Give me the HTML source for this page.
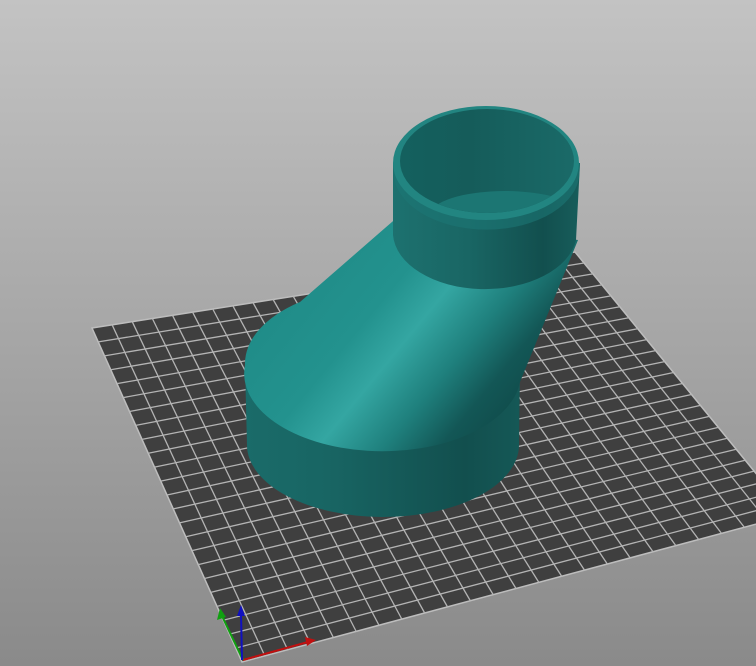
<!DOCTYPE html>
<html><head><meta charset="utf-8"><style>html,body{margin:0;padding:0;width:756px;height:666px;overflow:hidden}svg{display:block}</style></head>
<body>
<svg id="s" width="756" height="666" viewBox="0 0 756 666" xmlns="http://www.w3.org/2000/svg">
<defs>
<linearGradient id="bg" x1="0" y1="0" x2="0" y2="1"><stop offset="0" stop-color="#c3c3c3"/><stop offset="1" stop-color="#8a8a8a"/></linearGradient>
<linearGradient id="tube" gradientUnits="userSpaceOnUse" x1="250" y1="290" x2="530" y2="520"><stop offset="0" stop-color="#1f8a86"/><stop offset=".3" stop-color="#23928e"/><stop offset=".42" stop-color="#34a6a2"/><stop offset=".56" stop-color="#1f807d"/><stop offset=".68" stop-color="#135756"/><stop offset=".8" stop-color="#0f4a49"/></linearGradient>
<linearGradient id="base" gradientUnits="userSpaceOnUse" x1="247" y1="0" x2="519" y2="0"><stop offset="0" stop-color="#1a6b69"/><stop offset=".3" stop-color="#186563"/><stop offset=".8" stop-color="#124f4e"/><stop offset="1" stop-color="#155856"/></linearGradient>
<linearGradient id="up" gradientUnits="userSpaceOnUse" x1="393" y1="0" x2="580" y2="0"><stop offset="0" stop-color="#1d716f"/><stop offset=".4" stop-color="#196664"/><stop offset=".8" stop-color="#124f4e"/><stop offset="1" stop-color="#175d5b"/></linearGradient>
<linearGradient id="inner" gradientUnits="userSpaceOnUse" x1="400" y1="0" x2="575" y2="0"><stop offset="0" stop-color="#14605e"/><stop offset=".4" stop-color="#155c5a"/><stop offset="1" stop-color="#1a6a68"/></linearGradient>
<clipPath id="ic"><ellipse cx="487" cy="161" rx="87" ry="52"/></clipPath>
</defs>
<rect width="756" height="666" fill="url(#bg)"/>
<polygon points="92,328 575,252 790,515 242,662" fill="#3f3f3f" stroke="#bdbdbd" stroke-width="1.5"/>
<g id="grid" stroke="#b4b4b4" stroke-width="1.3"></g>
<line x1="243" y1="660" x2="308" y2="642" stroke="#c01010" stroke-width="2"/>
<polygon points="316,640 305,637 307,646" fill="#c01010"/>
<line x1="243" y1="660" x2="222" y2="616" stroke="#10a010" stroke-width="2"/>
<polygon points="220,608 217,620 226,617" fill="#10a010"/>
<line x1="242" y1="660" x2="241" y2="614" stroke="#1010c0" stroke-width="2"/>
<polygon points="241,605 237,616 245,616" fill="#1010c0"/>
<path d="M245,365 L247,445 A136,72 0 0 0 519,445 L520,365 Z" fill="url(#base)"/>
<path d="M245,365 A137,77 0 0 1 300,302 L400,215 L578,240 L520,382 A137,77 0 0 1 245,365 Z" fill="url(#tube)"/>
<path d="M393,163 L393,235 A92,57 0 0 0 576,240 L580,163 Z" fill="url(#up)"/>
<path d="M393,163 L393.5,172 A92,57 0 0 0 579.5,172 L580,163 Z" fill="#1d7774" opacity=".6"/>
<ellipse cx="486" cy="163" rx="93" ry="57" fill="#228581"/>
<ellipse cx="487" cy="161" rx="87" ry="52" fill="url(#inner)"/>
<g clip-path="url(#ic)"><ellipse cx="505" cy="215" rx="75" ry="24" fill="#1c7673"/></g>
</svg>
<script>
var g=document.getElementById('grid');
var A=[92,328],B=[575,252],C=[790,515],D=[242,662],N=24;
function p(u,v){var x=(1-u)*(1-v)*A[0]+u*(1-v)*B[0]+u*v*C[0]+(1-u)*v*D[0];var y=(1-u)*(1-v)*A[1]+u*(1-v)*B[1]+u*v*C[1]+(1-u)*v*D[1];return [x,y];}
var h='';
for(var i=1;i<N;i++){var t=i/N;var a=p(t,0),b=p(t,1),c=p(0,t),d=p(1,t);
h+='<line x1="'+a[0]+'" y1="'+a[1]+'" x2="'+b[0]+'" y2="'+b[1]+'"/>';
h+='<line x1="'+c[0]+'" y1="'+c[1]+'" x2="'+d[0]+'" y2="'+d[1]+'"/>';}
g.innerHTML=h;
</script>
</body></html>
